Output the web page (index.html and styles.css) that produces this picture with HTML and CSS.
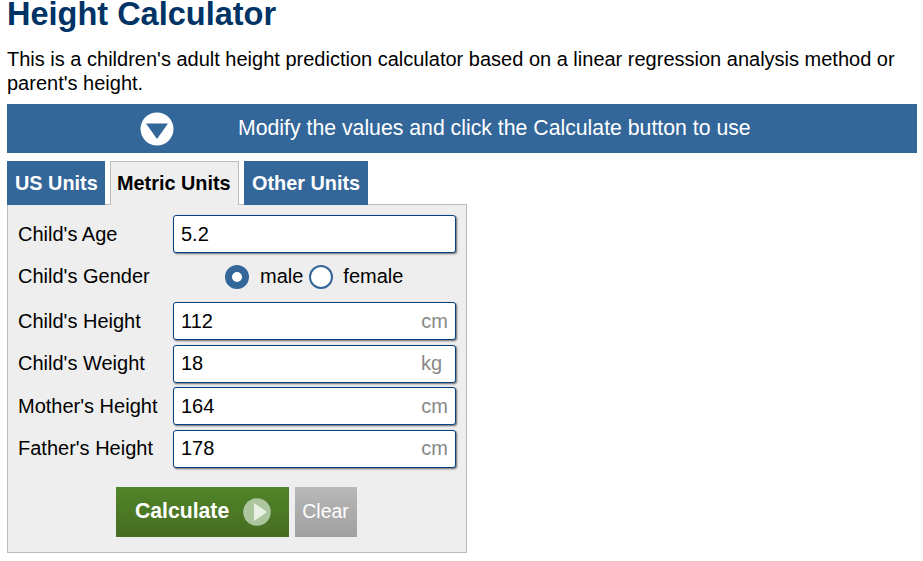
FILE: index.html
```html
<!DOCTYPE html>
<html lang="en">
<head>
<meta charset="utf-8">
<title>Height Calculator</title>
<link rel="stylesheet" href="styles.css">
</head>
<body>
<main class="page">
  <h1 class="title">Height Calculator</h1>
  <p class="intro">This is a children's adult height prediction calculator based on a linear regression analysis method or parent's height.</p>
  <div class="banner">
    <svg class="banner-icon" width="34" height="34" viewBox="0 0 34 34" aria-hidden="true">
      <circle cx="17" cy="17" r="16.5" fill="#fff"/>
      <path d="M6 11.5H28L17 27Z" fill="#336699"/>
    </svg>
    <span class="banner-text">Modify the values and click the Calculate button to use</span>
  </div>
  <div class="tabs">
    <div class="tab tab-us">US Units</div>
    <div class="tab tab-active">Metric Units</div>
    <div class="tab tab-other">Other Units</div>
  </div>
  <form class="panel">
    <div class="row">
      <span class="label">Child's Age</span>
      <div class="field"><span class="value">5.2</span></div>
    </div>
    <div class="row row-gender">
      <span class="label">Child's Gender</span>
      <div class="gender">
        <span class="radio radio-on"></span><span class="radio-label">male</span>
        <span class="radio"></span><span class="radio-label">female</span>
      </div>
    </div>
    <div class="row">
      <span class="label">Child's Height</span>
      <div class="field"><span class="value">112</span><span class="unit">cm</span></div>
    </div>
    <div class="row">
      <span class="label">Child's Weight</span>
      <div class="field"><span class="value">18</span><span class="unit unit-kg">kg</span></div>
    </div>
    <div class="row">
      <span class="label">Mother's Height</span>
      <div class="field"><span class="value">164</span><span class="unit">cm</span></div>
    </div>
    <div class="row">
      <span class="label">Father's Height</span>
      <div class="field"><span class="value">178</span><span class="unit">cm</span></div>
    </div>
    <div class="actions">
      <button type="button" class="btn-calc">Calculate
        <svg class="play" width="28" height="28" viewBox="0 0 28 28" aria-hidden="true">
          <circle cx="14" cy="14" r="13.8" fill="#aec6a0"/>
          <path d="M11 5L24 14L11 23Z" fill="#e8f0e3"/>
        </svg>
      </button>
      <button type="button" class="btn-clear">Clear</button>
    </div>
  </form>
</main>
</body>
</html>
```
FILE: styles.css
```css
* { box-sizing: border-box; }
html, body { margin: 0; padding: 0; background: #fff; }
body {
  font-family: "Liberation Sans", Arial, sans-serif;
  font-size: 20px;
  color: #000;
  overflow: hidden;
}
.page { width: 917px; padding-left: 7px; }
.title {
  margin: 0;
  height: 30px;
  font-size: 32.5px;
  line-height: 28px;
  font-weight: 700;
  color: #003366;
}
.intro {
  margin: 17px 0 0;
  font-size: 20px;
  line-height: 24px;
  height: 48px;
}
.banner {
  margin-top: 9px;
  height: 49px;
  background: #336699;
  color: #fff;
  display: flex;
  align-items: center;
}
.banner-icon { margin-left: 133px; flex: none; }
.banner-text { margin-left: 64px; font-size: 21.25px; }
.tabs { display: flex; gap: 5px; margin-top: 8px; height: 44px; position: relative; z-index: 1; }
.tab {
  height: 44px;
  padding: 0 0 0 8px;
  background: #336699;
  color: #fff;
  font-weight: 700;
  font-size: 19.85px;
  line-height: 44px;
  white-space: nowrap;
}
.tab-us { width: 98px; }
.tab-other { width: 124px; }
.tab-active {
  width: 129px;
  background: #eeeeee;
  color: #000;
  border: 1px solid #bbbbbb;
  border-bottom: 0;
  padding: 0 0 0 6px;
  line-height: 43px;
}
.panel {
  width: 460px;
  height: 349px;
  margin-top: -1px;
  background: #eeeeee;
  border: 1px solid #bbbbbb;
  padding: 10px 10px 0;
}
.row { display: flex; align-items: center; height: 38px; margin-bottom: 4.6px; }
.row-gender { height: 47px; margin-bottom: 2px; margin-top: -4.6px; }
.label { width: 155px; flex: none; }
.field {
  width: 283px;
  height: 38px;
  background: #fff;
  border: 1px solid #044284;
  border-radius: 3px;
  box-shadow: 1px 1px 2px #666;
  display: flex;
  align-items: center;
  justify-content: space-between;
  padding: 0 7px;
}
.unit { color: #888; }
.unit-kg { margin-right: 6px; }
.gender { display: flex; align-items: center; margin-left: 52px; }
.radio {
  width: 24px;
  height: 24px;
  border-radius: 50%;
  border: 2px solid #336699;
  background: #fff;
  flex: none;
}
.radio-on { border: 7px solid #336699; }
.radio-label { margin-left: 11px; }
.radio-label + .radio { margin-left: 6px; }
.radio + .radio-label + .radio + .radio-label { margin-left: 10px; }
.actions { display: flex; gap: 6px; margin: 19px 0 0 98px; }
.btn-calc {
  width: 173px;
  height: 50px;
  border: 0;
  padding: 0 0 2px 19px;
  background: linear-gradient(#518428, #466d22);
  color: #fff;
  font: 700 21.2px "Liberation Sans", Arial, sans-serif;
  display: flex;
  align-items: center;
  gap: 14px;
}
.play { margin-top: 2px; flex: none; }
.btn-clear {
  width: 62px;
  height: 50px;
  border: 0;
  padding: 0 1px 0 0;
  background: linear-gradient(#b8b8b8, #a0a0a0);
  color: #fff;
  font: 19.4px "Liberation Sans", Arial, sans-serif;
}
```
